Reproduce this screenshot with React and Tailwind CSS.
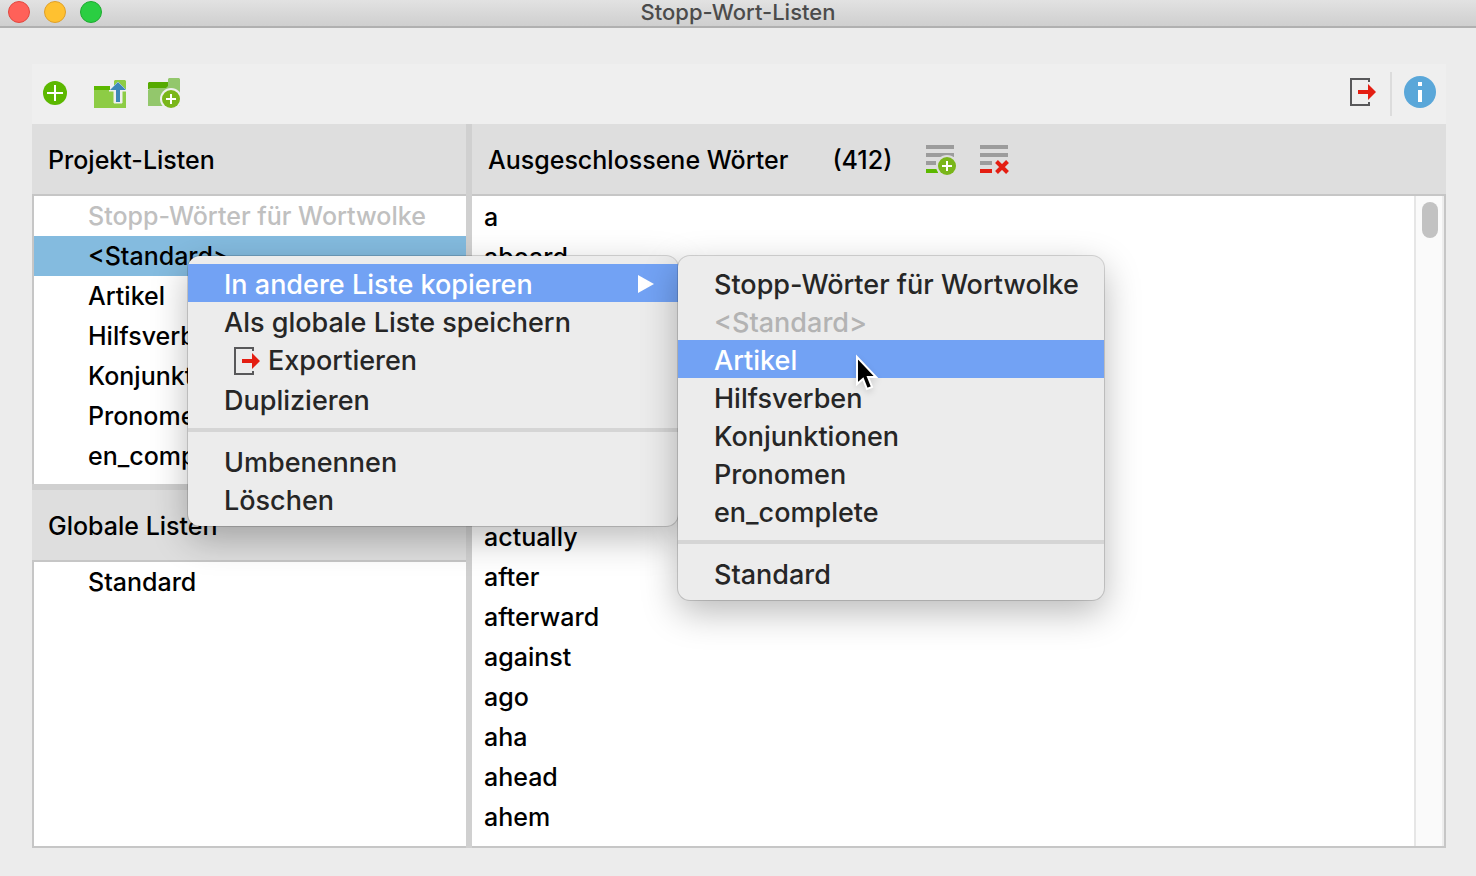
import React, { useState } from 'react'

const projectLists = ['Stopp-Wörter für Wortwolke', '<Standard>', 'Artikel', 'Hilfsverben', 'Konjunktionen', 'Pronomen', 'en_complete']

const words = [
  'a', 'aboard', 'about', 'above', 'abroad', 'according', 'accordingly', 'across',
  'actually', 'after', 'afterward', 'against', 'ago', 'aha', 'ahead', 'ahem',
]

const PlusCircleIcon = () => (
  <svg width="24" height="24" viewBox="0 0 24 24" aria-hidden="true">
    <circle cx="12" cy="12" r="12" fill="#5cb800" />
    <path d="M4 12h16M12 4v16" stroke="#fff" strokeWidth="2" />
  </svg>
)

const FolderUpIcon = () => (
  <svg width="34" height="30" viewBox="0 0 34 30" aria-hidden="true">
    <path d="M0 8h16v5H0z" fill="#5cb800" />
    <path d="M20 3l1-1h10l1 1v27H0V12h20z" fill="#8dcc45" />
    <path d="M24 4L15 13h5v12h8V13h5z" fill="#efefef" stroke="#efefef" strokeWidth="1" />
    <path d="M24 4l8 8h-6v12h-4V12h-6z" fill="#3d87b8" />
  </svg>
)

const FolderPlusIcon = () => (
  <svg width="34" height="30" viewBox="0 0 34 30" aria-hidden="true">
    <path d="M1 4h19v7H0V5z" fill="#55aa00" />
    <path d="M0 12l2-2h16l2-2V1l1-1h10l1 1v27H0z" fill="#93c76c" />
    <circle cx="23" cy="21" r="11" fill="#efefef" />
    <circle cx="23" cy="21" r="9" fill="#7ab61a" />
    <path d="M18 21h10M23 16v10" stroke="#fff" strokeWidth="2" />
  </svg>
)

const ExportIcon = () => (
  <svg width="26" height="28" viewBox="0 0 26 28" aria-hidden="true">
    <path d="M19 4V1H1v26h18v-3" fill="none" stroke="#58585a" strokeWidth="2" />
    <path d="M8 12h10V6l8 8-8 8v-6H8z" fill="#e41e12" />
  </svg>
)

const InfoIcon = () => (
  <svg width="32" height="32" viewBox="0 0 32 32" aria-hidden="true">
    <circle cx="16" cy="16" r="16" fill="#5aa7d9" />
    <path d="M14 6h4v4h-4zM14 14h4v12h-4z" fill="#fff" />
  </svg>
)

const AddWordIcon = () => (
  <svg width="30" height="30" viewBox="0 0 30 30" aria-hidden="true">
    <path d="M0 0h28v4H0zM0 8h28v4H0zM0 16h10v4H0z" fill="#9c9c9c" />
    <path d="M0 24h12v4H0z" fill="#5cb800" />
    <circle cx="21" cy="21" r="11" fill="#dedede" />
    <circle cx="21" cy="21" r="9" fill="#7ab61a" />
    <path d="M16 21h10M21 16v10" stroke="#fff" strokeWidth="2" />
  </svg>
)

const RemoveWordIcon = () => (
  <svg width="30" height="30" viewBox="0 0 30 30" aria-hidden="true">
    <path d="M0 0h28v4H0zM0 8h28v4H0zM0 16h12v4H0z" fill="#9c9c9c" />
    <path d="M0 24h12v4H0z" fill="#e41e12" />
    <path d="M16.500 16.500l11 11M27.500 16.500l-11 11" stroke="#e41e12" strokeWidth="4" />
  </svg>
)

const PointerIcon = () => (
  <svg width="26" height="38" viewBox="0 0 26 38" aria-hidden="true" className="drop-shadow-md">
    <path d="M2 3v27l6-5 4 10 5-2-4-10h8z" fill="#000" stroke="#fff" strokeWidth="2" />
  </svg>
)

const PaneHeader = ({ children }) => (
  <div className="flex h-18 items-center border-b-2 border-[#c6c6c6] bg-[#dedede] px-4 pt-[2px]">{children}</div>
)

const MenuItem = ({ label, active, disabled, icon, arrow }) => (
  <button
    role="menuitem"
    disabled={disabled}
    className={`flex w-full items-center pr-6 text-left ${icon ? 'h-10 gap-2 pt-px pl-[46px]' : 'h-[38px] pt-[3px] pl-9'} ${active ? 'bg-[#72a2f4] text-white' : disabled ? 'text-[#b3b3b3]' : 'text-[#262626]'}`}
  >
    {icon}
    <span>{label}</span>
    {arrow && (
      <svg width="16" height="18" viewBox="0 0 16 18" className="mb-[2px] ml-auto" aria-hidden="true">
        <path d="M0 0l16 9-16 9z" fill="#fff" />
      </svg>
    )}
  </button>
)

const MenuLine = () => <div role="separator" className="my-[10px] h-1 bg-[#d5d5d5]" />

const menuBox = 'absolute rounded-xl bg-[#ececec] py-2 text-[27px] whitespace-nowrap shadow-[0_0_0_1px_rgba(0,0,0,0.15),0_12px_36px_rgba(0,0,0,0.28)]'

const CopyMenu = () => (
  <div role="menu" className={`${menuBox} -top-2 left-full w-[426px]`}>
    <MenuItem label="Stopp-Wörter für Wortwolke" />
    <MenuItem label="<Standard>" disabled />
    <div className="relative">
      <MenuItem label="Artikel" active />
      <div className="pointer-events-none absolute top-[14px] left-[177px] z-10">
        <PointerIcon />
      </div>
    </div>
    <MenuItem label="Hilfsverben" />
    <MenuItem label="Konjunktionen" />
    <MenuItem label="Pronomen" />
    <MenuItem label="en_complete" />
    <MenuLine />
    <MenuItem label="Standard" />
  </div>
)

const ContextMenu = () => (
  <div role="menu" className={`${menuBox} top-5 left-[154px] z-20 w-[490px]`}>
    <div className="relative">
      <MenuItem label="In andere Liste kopieren" active arrow />
      <CopyMenu />
    </div>
    <MenuItem label="Als globale Liste speichern" />
    <MenuItem label="Exportieren" icon={<ExportIcon />} />
    <MenuItem label="Duplizieren" />
    <MenuLine />
    <MenuItem label="Umbenennen" />
    <MenuItem label="Löschen" />
  </div>
)

const App = () => {
  const [selected, setSelected] = useState('<Standard>')

  return (
    <div className="flex min-h-screen flex-col bg-[#ececec] font-['Inter',sans-serif] text-[25px] leading-8 font-[450] text-black">
      <header className="grid h-7 grid-cols-[1fr_auto_1fr] items-center border-b-2 border-[#b0b0b0] bg-linear-to-b from-[#e2e2e2] to-[#cfcfcf] px-2 pb-[2px]">
        <div className="flex gap-[14px]">
          <button aria-label="Schließen" className="size-[22px] rounded-full border border-[#e2483f] bg-[#ff6159]" />
          <button aria-label="Minimieren" className="size-[22px] rounded-full border border-[#e0a028] bg-[#ffc130]" />
          <button aria-label="Maximieren" className="size-[22px] rounded-full border border-[#1eab30] bg-[#2ace42]" />
        </div>
        <h1 className="text-[22px] leading-6 font-medium text-[#4b4b4b]">Stopp-Wort-Listen</h1>
      </header>

      <main className="flex flex-1 flex-col pt-9 pr-[30px] pb-7 pl-8">
        <div className="flex h-15 items-center bg-[#efefef] pr-[10px] pb-1 pl-[11px]">
          <button aria-label="Neue Liste" className="pt-[2px]"><PlusCircleIcon /></button>
          <button aria-label="Liste importieren" className="ml-[27px] pt-[2px]"><FolderUpIcon /></button>
          <button aria-label="Liste hinzufügen" className="ml-5 pt-[2px]"><FolderPlusIcon /></button>
          <button aria-label="Exportieren" className="mr-[14px] ml-auto"><ExportIcon /></button>
          <div className="mt-1 mr-3 h-11 w-[2px] bg-[#dcdcdc]" />
          <button aria-label="Info"><InfoIcon /></button>
        </div>

        <div className="flex flex-1">
          <aside className="flex w-[434px] shrink-0 flex-col">
            <PaneHeader><h2>Projekt-Listen</h2></PaneHeader>
            <ul className="border-l-2 border-[#c6c6c6] bg-white pb-2">
              {projectLists.map((name, index) => (
                <li key={name} className="relative">
                  <button
                    onClick={() => setSelected(name)}
                    className={`h-10 w-full pl-[54px] text-left ${name === selected ? 'bg-[#84bbdf]' : ''} ${index === 0 ? 'text-[#c0c0c0]' : ''}`}
                  >
                    {name}
                  </button>
                  {name === '<Standard>' && <ContextMenu />}
                </li>
              ))}
            </ul>
            <div className="h-[6px] bg-[#d0d0d0]" />
            <PaneHeader><h2>Globale Listen</h2></PaneHeader>
            <ul className="flex-1 border-b-2 border-l-2 border-[#c6c6c6] bg-white">
              <li><button className="h-10 w-full pl-[54px] text-left">Standard</button></li>
            </ul>
          </aside>

          <div className="w-[6px] shrink-0 bg-[#d0d0d0]" />

          <section className="flex min-w-0 flex-1 flex-col">
            <PaneHeader>
              <h2>Ausgeschlossene Wörter</h2>
              <span className="ml-11">(412)</span>
              <button aria-label="Wort hinzufügen" className="ml-[34px] pb-px"><AddWordIcon /></button>
              <button aria-label="Wort entfernen" className="ml-6 pb-px"><RemoveWordIcon /></button>
            </PaneHeader>
            <div className="flex flex-1 border-r-2 border-b-2 border-[#c6c6c6] bg-white">
              <ul className="flex-1 pt-px pl-3">
                {words.map((word) => (
                  <li key={word} className="flex h-10 items-center">{word}</li>
                ))}
              </ul>
              <div className="w-[30px] border-r-2 border-l-2 border-r-[#ededed] border-l-[#e6e6e6] bg-[#fafafa] px-[6px] pt-[6px]">
                <div className="h-9 w-4 rounded-full bg-[#c2c2c2]" />
              </div>
            </div>
          </section>
        </div>
      </main>
    </div>
  )
}

export default App
